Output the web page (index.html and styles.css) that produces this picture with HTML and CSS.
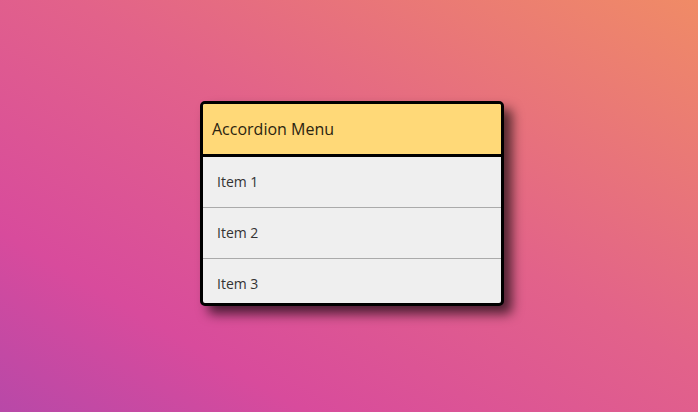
FILE: index.html
```html
<!DOCTYPE html>
<html lang="en">
<head>
    <meta charset="UTF-8">
    <meta name="viewport" content="width=device-width, initial-scale=1.0">
    <title>Accordion Menu</title>
    <link rel="stylesheet" href="styles.css">
</head>
<body>
    <div class="accordion">
        <div class="accordion-title">Accordion Menu</div>
        <ul class="accordion-items">
            <li>Item 1</li>
            <li>Item 2</li>
            <li>Item 3</li>
        </ul>
    </div>
</body>
</html>
```

FILE: styles.css
```css
body {
    font-family: "Open Sans", Arial, sans-serif;
    margin: 0;
    padding: 0;
    height: 412px;
    background: linear-gradient(to top right, #b848a8 0%, #d84b9c 22%, #e2628a 55%, #f08b66 100%);
    display: flex;
    justify-content: center;
    align-items: flex-start;
}

.accordion {
    margin-top: 101px;
    margin-left: 6px;
    width: 298px;
    height: 199px;
    border: 3px solid #000;
    border-radius: 5px;
    overflow: hidden;
    background-color: #efefef;
    box-shadow: 8px 8px 12px rgba(0, 0, 0, 0.65);
}

.accordion-title {
    height: 50px;
    line-height: 50px;
    padding-left: 9px;
    font-size: 16px;
    color: #2b2410;
    background-color: #ffd978;
    border-bottom: 3px solid #000;
}

.accordion-items {
    list-style: none;
    margin: 0;
    padding: 0;
}

.accordion-items li {
    height: 50px;
    line-height: 50px;
    padding-left: 14px;
    font-size: 14px;
    color: #333;
    border-bottom: 1px solid #aaa;
}

.accordion-items li:last-child {
    border-bottom: none;
}
```
